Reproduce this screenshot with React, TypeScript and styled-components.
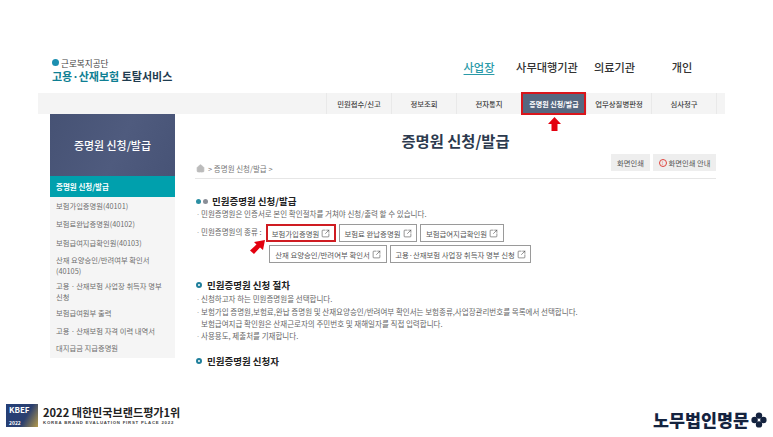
import { createGlobalStyle, styled } from "styled-components"
import { Home, SquareArrowOutUpRight } from "lucide-react"

const GlobalStyle = createGlobalStyle`
	html, body {
		margin: 0;
		padding: 0;
		background: #fff;
		font-family: "Noto Sans CJK KR", "Noto Sans", sans-serif;
		color: #555;
	}
`

const Page = styled.div`
	width: 773px;
	height: 437px;
	overflow: hidden;
	display: flex;
	flex-direction: column;
`

// Logo + top level nav
const Header = styled.header`
	height: 93px;
	padding: 56px 0 0 52px;
	box-sizing: border-box;
	display: flex;
	align-items: flex-start;
`

const Logo = styled.div`
	width: 394px;
	display: flex;
	flex-direction: column;
`

const Agency = styled.div`
	display: flex;
	align-items: center;
	gap: 2px;
	height: 13px;
	font-size: 8.6px;
	color: #444;
`

const LogoMark = styled.span`
	width: 7px;
	height: 7px;
	border-radius: 50%;
	background: #1c8fb0;
`

const ServiceName = styled.div`
	font-size: 11px;
	font-weight: 700;
	line-height: 14px;
	color: #1f3c4f;
	white-space: nowrap;

	em {
		font-style: normal;
		color: #0f7f93;
	}
`

const TopNav = styled.nav`
	display: flex;
	margin-top: 3px;
`

const TopLink = styled.a<{ $width: number; $active?: boolean }>`
	width: ${(p) => p.$width}px;
	text-align: center;
	font-size: 11.2px;
	font-weight: 500;
	line-height: 17px;
	white-space: nowrap;
	color: ${(p) => (p.$active ? "#2a9aa8" : "#333")};
	text-decoration: ${(p) => (p.$active ? "underline" : "none")};
	text-underline-offset: 2px;
`

// Grey second level menu
const TabBar = styled.div`
	margin-left: 38px;
	width: 399px;
	height: 21px;
	background: #f4f4f4;
	padding-left: 288px;
	display: flex;
`

const Tab = styled.div<{ $selected?: boolean }>`
	position: relative;
	width: 65px;
	box-sizing: border-box;
	display: flex;
	align-items: center;
	justify-content: center;
	font-size: 7.4px;
	white-space: nowrap;
	color: ${(p) => (p.$selected ? "#fff" : "#444")};
	font-weight: ${(p) => (p.$selected ? 700 : 500)};
	background: ${(p) => (p.$selected ? "#566880" : "transparent")};
	border-left: 1px solid #e9e9e9;
	${(p) => (p.$selected ? "outline: 2px solid #d9161c; outline-offset: -2px; margin-top: -1px; height: 23px; font-size: 7px;" : "")}
`

const UpArrow = styled.svg`
	position: absolute;
	left: 26px;
	top: 25px;
`

const TabEnd = styled.div`
	border-left: 1px solid #e9e9e9;
`

const Body = styled.div`
	display: flex;
	padding-left: 50px;
`

const Sidebar = styled.aside`
	width: 125px;
	background: #f5f5f5;
	height: 244px;
	flex: none;
`

const SideTitle = styled.div`
	height: 62px;
	background: linear-gradient(115deg, #465274 0%, #4f5b7e 55%, #475376 100%);
	color: #fff;
	display: flex;
	align-items: center;
	justify-content: center;
	font-size: 10.9px;
	font-weight: 500;
`

const SideActive = styled.div`
	height: 21px;
	background: #00a0ad;
	color: #fff;
	font-size: 7.5px;
	font-weight: 700;
	line-height: 21px;
	padding-left: 6px;
`

const SideList = styled.ul`
	list-style: none;
	margin: 0;
	padding: 0 6px;
`

const SideItem = styled.li<{ $height: number }>`
	height: ${(p) => p.$height}px;
	display: flex;
	align-items: center;
	font-size: 7.3px;
	line-height: 11.5px;
	color: #6e6e6e;
`

const Main = styled.main`
	width: 521px;
	margin-left: 20px;
	flex: none;
`

const PageTitle = styled.h1`
	margin: 0;
	height: 37px;
	padding-top: 15px;
	box-sizing: content-box;
	text-align: center;
	font-size: 15.3px;
	line-height: 22px;
	font-weight: 700;
	color: #2c3a4e;
`

const Breadcrumb = styled.div`
	height: 24px;
	margin-top: -11px;
	box-sizing: border-box;
	padding-bottom: 1px;
	border-bottom: 1px solid #e6e6e6;
	display: flex;
	align-items: center;
	justify-content: space-between;
	font-size: 7.5px;
	color: #777;
`

const Crumbs = styled.div`
	display: flex;
	align-items: center;
	gap: 3px;
	padding: 4px 0 0 1px;
`

const PrintButtons = styled.div`
	display: flex;
	gap: 3px;
	margin-bottom: 7px;
`

const PrintButton = styled.div<{ $width: number }>`
	width: ${(p) => p.$width}px;
	height: 17px;
	background: #eeeeee;
	display: flex;
	align-items: center;
	justify-content: center;
	gap: 2px;
	font-size: 7.3px;
	color: #555;
	white-space: nowrap;
`

const AlertDot = styled.span`
	width: 8px;
	height: 8px;
	border: 1px solid #e0433c;
	border-radius: 50%;
	box-sizing: border-box;
	color: #e0433c;
	font-size: 5px;
	line-height: 6px;
	text-align: center;
`

const SectionTitle = styled.h2<{ $top: number }>`
	margin: ${(p) => p.$top}px 0 0;
	display: flex;
	align-items: center;
	gap: 3px;
	font-size: 9.5px;
	line-height: 14px;
	font-weight: 700;
	color: #222;
`

const Dots = styled.span`
	display: flex;
	gap: 2px;
	width: 14px;
	padding-left: 1px;
	box-sizing: border-box;
`

const Dot = styled.i<{ $color: string }>`
	width: 5px;
	height: 5px;
	border-radius: 50%;
	background: ${(p) => p.$color};
`

const Ring = styled.i`
	width: 6px;
	height: 6px;
	box-sizing: border-box;
	border-radius: 50%;
	border: 2px solid #1f7f9b;
	margin: 0 2px 0 1px;
`

const Note = styled.p`
	margin: 0;
	padding-left: 6px;
	position: relative;
	font-size: 7.5px;
	line-height: 12.3px;
	color: #666;
	white-space: nowrap;

	&::before {
		content: "·";
		position: absolute;
		left: 1px;
		color: #aaa;
	}
`

const DocTypes = styled.div`
	display: flex;
	margin-top: 4px;
`

const DocLabel = styled(Note)`
	width: 65px;
	flex: none;
	padding-top: 2px;
`

const DocRows = styled.div`
	display: flex;
	flex-direction: column;
	gap: 3px;
`

const DocRow = styled.div<{ $indent?: number }>`
	display: flex;
	gap: 3px;
	margin-left: ${(p) => p.$indent ?? 0}px;
`

const DocButton = styled.div<{ $width: number; $marked?: boolean }>`
	position: relative;
	width: ${(p) => p.$width}px;
	height: 18px;
	box-sizing: border-box;
	border: ${(p) => (p.$marked ? "2px solid #cf1c22" : "1px solid #9a9a9a")};
	display: flex;
	align-items: center;
	justify-content: center;
	gap: 2px;
	font-size: 7.4px;
	color: #555;
	white-space: nowrap;
`

const SideArrow = styled.svg`
	position: absolute;
	left: -19px;
	top: 14px;
`

const Procedure = styled.div`
	margin-top: 1px;
`

const Footer = styled.footer`
	margin-top: auto;
	height: 34px;
	padding: 0 6px 6px 6px;
	display: flex;
	justify-content: space-between;
	align-items: flex-end;
`

const Award = styled.div`
	display: flex;
	gap: 5px;
	align-items: flex-start;
	margin-bottom: 4px;
`

const AwardBadge = styled.div`
	width: 32px;
	height: 23px;
	background: linear-gradient(120deg, #233f78 0%, #2a3f70 60%, #b59a4a 100%);
	color: #fff;
	font-weight: 700;
	padding-left: 3px;
	box-sizing: border-box;
	display: flex;
	flex-direction: column;
	justify-content: space-between;
`

const BadgeName = styled.span`
	font-size: 8px;
	line-height: 12px;
`

const BadgeYear = styled.span`
	font-size: 5px;
	line-height: 8px;
`

const AwardText = styled.div`
	display: flex;
	flex-direction: column;
`

const AwardTitle = styled.div`
	font-size: 11.1px;
	font-weight: 700;
	line-height: 16px;
	color: #222;
	white-space: nowrap;
`

const AwardSub = styled.div`
	font-family: "Liberation Sans", sans-serif;
	font-size: 4.3px;
	font-weight: 700;
	letter-spacing: 0.78px;
	line-height: 6px;
	color: #444;
	white-space: nowrap;
`

const Firm = styled.div`
	display: flex;
	align-items: center;
	gap: 2px;
	font-size: 17.4px;
	font-weight: 900;
	line-height: 22px;
	color: #14233f;
`

const LinkIcon = () => <SquareArrowOutUpRight size={9} strokeWidth={1.5} color="#444" />

export default function App() {
	return (
		<Page>
			<GlobalStyle />
			<Header>
				<Logo>
					<Agency>
						<LogoMark />
						근로복지공단
					</Agency>
					<ServiceName>
						<em>고용·산재보험</em> 토탈서비스
					</ServiceName>
				</Logo>
				<TopNav>
					<TopLink $width={66} $active>
						사업장
					</TopLink>
					<TopLink $width={70}>사무대행기관</TopLink>
					<TopLink $width={65}>의료기관</TopLink>
					<TopLink $width={70}>개인</TopLink>
				</TopNav>
			</Header>

			<TabBar>
				<Tab>민원접수/신고</Tab>
				<Tab>정보조회</Tab>
				<Tab>전자통지</Tab>
				<Tab $selected>
					증명원 신청/발급
					<UpArrow width="13" height="14" viewBox="0 0 13 14">
						<path d="M6.5 0 L13 7 H9.5 V14 H3.5 V7 H0 Z" fill="#e3000f" />
					</UpArrow>
				</Tab>
				<Tab>업무상질병판정</Tab>
				<Tab>심사청구</Tab>
				<TabEnd />
			</TabBar>

			<Body>
				<Sidebar>
					<SideTitle>증명원 신청/발급</SideTitle>
					<SideActive>증명원 신청/발급</SideActive>
					<SideList>
						<SideItem $height={19}>보험가입증명원(40101)</SideItem>
						<SideItem $height={18}>보험료완납증명원(40102)</SideItem>
						<SideItem $height={19}>보험급여지급확인원(40103)</SideItem>
						<SideItem $height={26}>
							산재 요양승인/반려여부 확인서
							<br />
							(40105)
						</SideItem>
						<SideItem $height={26}>
							고용ㆍ산재보험 사업장 취득자 명부
							<br />
							신청
						</SideItem>
						<SideItem $height={18}>보험급여원부 출력</SideItem>
						<SideItem $height={17}>고용ㆍ산재보험 자격 이력 내역서</SideItem>
						<SideItem $height={18}>대지급금 지급증명원</SideItem>
					</SideList>
				</Sidebar>

				<Main>
					<PageTitle>증명원 신청/발급</PageTitle>
					<Breadcrumb>
						<Crumbs>
							<Home size={9} fill="#bbb" color="#bbb" />
							&gt; 증명원 신청/발급 &gt;
						</Crumbs>
						<PrintButtons>
							<PrintButton $width={39}>화면인쇄</PrintButton>
							<PrintButton $width={63}>
								<AlertDot>!</AlertDot> 화면인쇄 안내
							</PrintButton>
						</PrintButtons>
					</Breadcrumb>

					<SectionTitle $top={15}>
						<Dots>
							<Dot $color="#2c8fa3" />
							<Dot $color="#8a8f98" />
						</Dots>
						민원증명원 신청/발급
					</SectionTitle>
					<Note>민원증명원은 인증서로 본인 확인절차를 거쳐야 신청/출력 할 수 있습니다.</Note>
					<DocTypes>
						<DocLabel>민원증명원의 종류 :</DocLabel>
						<DocRows>
							<DocRow>
								<DocButton $width={70} $marked>
									보험가입증명원 <LinkIcon />
									<SideArrow width="16" height="15" viewBox="0 0 16 15">
										<path d="M16 0 L14 10 L11 7.5 L5 14 L1 10.5 L7.5 4.5 L5 2 Z" fill="#e3000f" />
									</SideArrow>
								</DocButton>
								<DocButton $width={78}>
									보험료 완납증명원 <LinkIcon />
								</DocButton>
								<DocButton $width={84}>
									보험급여지급확인원 <LinkIcon />
								</DocButton>
							</DocRow>
							<DocRow $indent={3}>
								<DocButton $width={118}>
									산재 요양승인/반려여부 확인서 <LinkIcon />
								</DocButton>
								<DocButton $width={141}>
									고용·산재보험 사업장 취득자 명부 신청 <LinkIcon />
								</DocButton>
							</DocRow>
						</DocRows>
					</DocTypes>

					<SectionTitle $top={15}>
						<Ring />
						민원증명원 신청 절차
					</SectionTitle>
					<Procedure>
						<Note>신청하고자 하는 민원증명원을 선택합니다.</Note>
						<Note>
							보험가입 증명원,보험료,완납 증명원 및 산재요양승인/반려여부 확인서는 보험종류,사업장관리번호를 목록에서 선택합니다.
							<br />
							보험급여지급 확인원은 산재근로자의 주민번호 및 재해일자를 직접 입력합니다.
						</Note>
						<Note>사용용도, 제출처를 기재합니다.</Note>
					</Procedure>
					<SectionTitle $top={12}>
						<Ring />
						민원증명원 신청자
					</SectionTitle>
				</Main>
			</Body>

			<Footer>
				<Award>
					<AwardBadge>
						<BadgeName>KBEF</BadgeName>
						<BadgeYear>2022</BadgeYear>
					</AwardBadge>
					<AwardText>
						<AwardTitle>2022 대한민국브랜드평가1위</AwardTitle>
						<AwardSub>KOREA BRAND EVALUATION FIRST PLACE 2022</AwardSub>
					</AwardText>
				</Award>
				<Firm>
					노무법인명문
					<svg width="16" height="16" viewBox="0 0 16 16">
						<g fill="#14233f">
							<circle cx="8" cy="3.6" r="3.2" />
							<circle cx="3.6" cy="8" r="3.2" />
							<circle cx="12.4" cy="8" r="3.2" />
							<circle cx="8" cy="12.4" r="3.2" />
						</g>
					</svg>
				</Firm>
			</Footer>
		</Page>
	)
}
